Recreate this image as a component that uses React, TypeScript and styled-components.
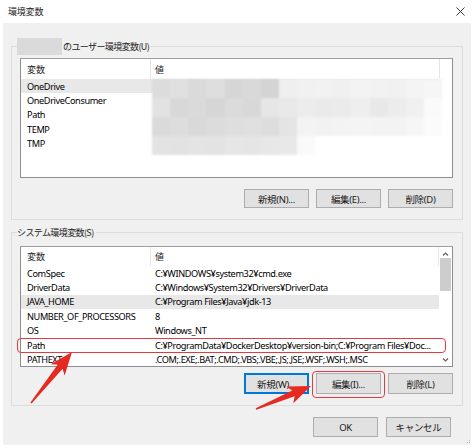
import React from "react";
import styled, { createGlobalStyle } from "styled-components";

const Global = createGlobalStyle`
  html, body { margin: 0; padding: 0; background: #ffffff; }
  body {
    font-family: "Noto Sans", "Noto Sans CJK JP", sans-serif;
    font-size: 9.5px;
    color: #000;
  }
  * { box-sizing: border-box; }
`;

const Window = styled.div`
  position: relative;
  width: 474px;
  height: 448px;
  background: #ffffff;
  display: flex;
  flex-direction: column;
  overflow: hidden;
`;

const TitleBar = styled.div`
  height: 23px;
  display: flex;
  align-items: center;
  justify-content: space-between;
  padding: 0 8px 0 8px;
  font-family: "Noto Sans CJK JP", sans-serif;
  font-size: 9px;
  letter-spacing: -0.2px;
  color: #1a1a1a;
`;

const Close = styled.svg`
  width: 9px;
  height: 9px;
  margin-right: 1px;
`;

const Body = styled.div`
  flex: 1;
  margin: 0 3px 3px 3px;
  background: #f0f0f0;
  padding: 15px 8px 0 8px;
  display: flex;
  flex-direction: column;
`;

const Group = styled.fieldset<{ $top?: number; $pt: number; $pb: number }>`
  margin: ${(p) => p.$top ?? 0}px 0 0 0;
  padding: ${(p) => p.$pt}px 9px ${(p) => p.$pb}px 8px;
  border: 1px solid #dcdcdc;
  min-width: 0;
`;

const Legend = styled.legend`
  margin-left: -3px;
  padding: 0 2px 0 0;
  height: 17px;
  display: flex;
  align-items: center;
  font-family: "Noto Sans CJK JP", sans-serif;
  font-size: 9px;
  letter-spacing: -0.6px;
  color: #1a1a1a;
`;

const NameBlur = styled.span`
  display: inline-block;
  width: 45px;
  height: 17px;
  background: #dadada;
  margin-right: 1px;
`;

const List = styled.div<{ $h: number }>`
  position: relative;
  height: ${(p) => p.$h}px;
  background: #ffffff;
  border: 1px solid #8e8e8e;
  border-top-color: #a0a0a0;
  display: flex;
`;

const ListMain = styled.div<{ $pr: number }>`
  flex: 1;
  display: flex;
  flex-direction: column;
  padding-right: ${(p) => p.$pr}px;
  overflow: hidden;
`;

const Header = styled.div<{ $h: number }>`
  height: ${(p) => p.$h}px;
  display: flex;
  flex-shrink: 0;
  font-family: "Noto Sans CJK JP", sans-serif;
  font-size: 9px;
  color: #1a1a1a;
`;

const HeadCell = styled.div<{ $w?: number }>`
  ${(p) => (p.$w ? `width: ${p.$w}px;` : "flex: 1;")}
  display: flex;
  align-items: center;
  padding-left: ${(p) => (p.$w ? 6 : 4)}px;
  border-right: 1px solid #e5e5e5;
`;

const Row = styled.div<{ $sel?: boolean }>`
  height: 14.4px;
  display: flex;
  align-items: center;
  flex-shrink: 0;
  background: ${(p) => (p.$sel ? "#e8e8e8" : "transparent")};
  white-space: nowrap;
  font-size: 9.2px;
  letter-spacing: -0.4px;
`;

const NameCell = styled.div`
  width: 129px;
  padding-left: 6px;
  overflow: hidden;
`;

const ValueCell = styled.div`
  flex: 1;
  padding-left: 5px;
  overflow: hidden;
`;

const Mosaic = styled.div`
  position: absolute;
  left: 131px;
  top: 20px;
  width: 290px;
  height: 76px;
  display: grid;
  grid-template-columns: repeat(16, 1fr);
  grid-template-rows: repeat(4, 1fr);
  filter: blur(1.2px);
`;

const Tile = styled.div`
  width: 100%;
  height: 100%;
`;

const Scrollbar = styled.div`
  width: 13px;
  display: flex;
  flex-direction: column;
  align-items: center;
  background: #ffffff;
  padding: 4px 0 3px 0;
`;

const Thumb = styled.div`
  width: 11px;
  height: 33px;
  background: #cdcdcd;
  margin-top: 1px;
`;

const ScrollSpacer = styled.div`
  flex: 1;
`;

const Chevron = styled.svg`
  width: 7px;
  height: 6px;
`;

const RedRing = styled.div<{ $l: number; $t: number; $w: number; $h: number }>`
  position: absolute;
  left: ${(p) => p.$l}px;
  top: ${(p) => p.$t}px;
  width: ${(p) => p.$w}px;
  height: ${(p) => p.$h}px;
  border: 1.5px solid #e33b3f;
  border-radius: 4px;
  pointer-events: none;
`;

const ButtonRow = styled.div<{ $mt: number }>`
  margin-top: ${(p) => p.$mt}px;
  display: flex;
  justify-content: flex-end;
  gap: 7px;
`;

const Btn = styled.button<{ $focus?: boolean; $h: number }>`
  position: relative;
  width: 65px;
  height: ${(p) => p.$h}px;
  padding: 0;
  margin: 0;
  background: #e1e1e1;
  border: 1px solid ${(p) => (p.$focus ? "#0078d7" : "#adadad")};
  box-shadow: ${(p) => (p.$focus ? "inset 0 0 0 1px #0078d7" : "none")};
  font-family: "Noto Sans", "Noto Sans CJK JP", sans-serif;
  font-size: 9.5px;
  letter-spacing: -0.3px;
  color: #1a1a1a;
  display: flex;
  align-items: center;
  justify-content: center;
`;

const Footer = styled.div`
  display: flex;
  justify-content: flex-end;
  gap: 8px;
  margin-top: 11px;
  padding-right: 12px;
`;

const Overlay = styled.svg`
  position: absolute;
  left: 0;
  top: 0;
  width: 474px;
  height: 448px;
  pointer-events: none;
`;

const users = ["OneDrive", "OneDriveConsumer", "Path", "TEMP", "TMP"];

const system: [string, string][] = [
  ["ComSpec", "C:¥WINDOWS¥system32¥cmd.exe"],
  ["DriverData", "C:¥Windows¥System32¥Drivers¥DriverData"],
  ["JAVA_HOME", "C:¥Program Files¥Java¥jdk-13"],
  ["NUMBER_OF_PROCESSORS", "8"],
  ["OS", "Windows_NT"],
  ["Path", "C:¥ProgramData¥DockerDesktop¥version-bin;C:¥Program Files¥Doc..."],
  ["PATHEXT", ".COM;.EXE;.BAT;.CMD;.VBS;.VBE;.JS;.JSE;.WSF;.WSH;.MSC"],
];

const mosaic: string[][] = [
  ["#dcdcdc", "#e0e0e0", "#dadada", "#dedede", "#d6d6d6", "#d9d9d9", "#d4d4d4", "#efefef", "#f1f1f1", "#f2f2f2", "#f0f0f0", "#f3f3f3", "#f2f2f2", "#f1f1f1", "#f4f4f4", "#f6f6f6"],
  ["#e2e2e2", "#d8d8d8", "#dadada", "#d6d6d6", "#dbdbdb", "#d8d8d8", "#e6e6e6", "#e9e9e9", "#ececec", "#eaeaea", "#ebebeb", "#eeeeee", "#e8e8e8", "#ececec", "#f0f0f0", "#fafafa"],
  ["#dadada", "#dddddd", "#d9d9d9", "#dcdcdc", "#dedede", "#e0e0e0", "#dddddd", "#e4e4e4", "#f3f3f3", "#f2f2f2", "#f3f3f3", "#f4f4f4", "#f3f3f3", "#f3f3f3", "#f6f6f6", "#fbfbfb"],
  ["#e3e3e3", "#e2e2e2", "#e4e4e4", "#e3e3e3", "#e6e6e6", "#e5e5e5", "#e7e7e7", "#e8e8e8", "#fafafa", "#ffffff", "#ffffff", "#ffffff", "#ffffff", "#ffffff", "#ffffff", "#ffffff"],
];

function arrowPoints(x1: number, y1: number, x2: number, y2: number) {
  const dx = x2 - x1;
  const dy = y2 - y1;
  const L = Math.hypot(dx, dy);
  const ux = dx / L;
  const uy = dy / L;
  const nx = -uy;
  const ny = ux;
  const local: [number, number][] = [
    [0, -0.8],
    [L - 19, -3.2],
    [L - 23, -9],
    [L, 0],
    [L - 23, 9],
    [L - 19, 3.2],
    [0, 0.8],
  ];
  return local
    .map(([a, b]) => `${(x1 + ux * a + nx * b).toFixed(1)},${(y1 + uy * a + ny * b).toFixed(1)}`)
    .join(" ");
}

const ChevUp = () => (
  <Chevron viewBox="0 0 7 6">
    <polyline points="1,4.5 3.5,2 6,4.5" fill="none" stroke="#606060" strokeWidth="1.2" />
  </Chevron>
);
const ChevDown = () => (
  <Chevron viewBox="0 0 7 6">
    <polyline points="1,1.5 3.5,4 6,1.5" fill="none" stroke="#606060" strokeWidth="1.2" />
  </Chevron>
);

export default function App() {
  return (
    <>
      <Global />
      <Window>
        <TitleBar>
          <span>環境変数</span>
          <Close viewBox="0 0 9 9">
            <path d="M0.5 0.5 L8.5 8.5 M8.5 0.5 L0.5 8.5" stroke="#222" strokeWidth="0.9" />
          </Close>
        </TitleBar>
        <Body>
          <Group $pt={3} $pb={11}>
            <Legend>
              <NameBlur />
              のユーザー環境変数(U)
            </Legend>
            <List $h={120}>
              <ListMain $pr={12}>
                <Header $h={20}>
                  <HeadCell $w={130}>変数</HeadCell>
                  <HeadCell>値</HeadCell>
                </Header>
                {users.map((u, i) => (
                  <Row key={u} $sel={i === 0}>
                    <NameCell>{u}</NameCell>
                    <ValueCell />
                  </Row>
                ))}
              </ListMain>
              <Mosaic>
                {mosaic.flatMap((r, ri) =>
                  r.map((c, ci) => <Tile key={`${ri}-${ci}`} style={{ background: c }} />)
                )}
              </Mosaic>
            </List>
            <ButtonRow $mt={11}>
              <Btn $h={19}>新規(N)...</Btn>
              <Btn $h={19}>編集(E)...</Btn>
              <Btn $h={19}>削除(D)</Btn>
            </ButtonRow>
          </Group>
          <Group $top={4} $pt={5} $pb={11}>
            <Legend>システム環境変数(S)</Legend>
            <List $h={121}>
              <ListMain $pr={0}>
                <Header $h={19}>
                  <HeadCell $w={130}>変数</HeadCell>
                  <HeadCell>値</HeadCell>
                </Header>
                {system.map(([n, v]) => (
                  <Row key={n} $sel={n === "JAVA_HOME"}>
                    <NameCell>{n}</NameCell>
                    <ValueCell>{v}</ValueCell>
                  </Row>
                ))}
              </ListMain>
              <Scrollbar>
                <ChevUp />
                <Thumb />
                <ScrollSpacer />
                <ChevDown />
              </Scrollbar>
              <RedRing $l={-4} $t={91} $w={429} $h={15} />
            </List>
            <ButtonRow $mt={6}>
              <Btn $h={21} $focus>
                新規(W)...
              </Btn>
              <Btn $h={21}>
                編集(I)...
                <RedRing $l={-5} $t={-3} $w={73} $h={27} />
              </Btn>
              <Btn $h={21}>削除(L)</Btn>
            </ButtonRow>
          </Group>
          <Footer>
            <Btn $h={20}>OK</Btn>
            <Btn $h={20}>キャンセル</Btn>
          </Footer>
        </Body>
        <Overlay viewBox="0 0 474 448">
          <defs>
            <linearGradient id="ar" x1="0" y1="0" x2="1" y2="1">
              <stop offset="0" stopColor="#f2382c" />
              <stop offset="1" stopColor="#d91c17" />
            </linearGradient>
          </defs>
          <polygon points={arrowPoints(31, 403, 72, 352)} fill="url(#ar)" />
          <polygon points={arrowPoints(256, 409, 311, 386)} fill="url(#ar)" />
          <g fill="#b8b8b8">
            <rect x="469" y="440" width="1" height="1" />
            <rect x="467" y="442" width="1" height="1" />
            <rect x="469" y="442" width="1" height="1" />
          </g>
        </Overlay>
      </Window>
    </>
  );
}
